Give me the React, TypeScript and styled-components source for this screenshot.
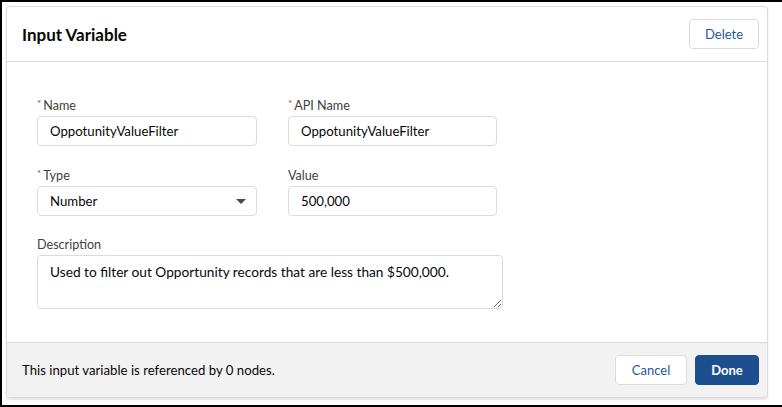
import styled, { createGlobalStyle } from 'styled-components'

const GlobalStyle = createGlobalStyle`
  * { box-sizing: border-box; }
  body {
    margin: 0;
    background: #ffffff;
    font-family: Lato, "Open Sans", "Liberation Sans", sans-serif;
    color: #080707;
  }
`

const Frame = styled.div`
  width: 782px;
  height: 407px;
  border: 2px solid #000;
  border-right: none;
  padding: 4px 14px 7px 4px;
  background: #fff;
`

const Card = styled.section`
  display: flex;
  flex-direction: column;
  height: 100%;
  border: 1px solid #dddbda;
  border-radius: 4px;
  background: #fff;
  box-shadow: 0 2px 2px rgba(0, 0, 0, 0.1);
  overflow: hidden;
`

const Header = styled.header`
  display: flex;
  align-items: center;
  justify-content: space-between;
  height: 55px;
  padding: 0 8px 0 15px;
  border-bottom: 1px solid #dddbda;
`

const Title = styled.h2`
  margin: 0;
  font-size: 17px;
  font-weight: 700;
  color: #080707;
`

const Button = styled.button<{ $brand?: boolean; $w: number }>`
  width: ${p => p.$w}px;
  height: 30px;
  padding: 0;
  border-radius: 4px;
  border: 1px solid ${p => (p.$brand ? '#1b4f8f' : '#dddbda')};
  background: ${p => (p.$brand ? '#1d4f8e' : '#fff')};
  color: ${p => (p.$brand ? '#fff' : '#27579a')};
  font-family: inherit;
  font-size: 13px;
  font-weight: ${p => (p.$brand ? 700 : 400)};
  cursor: pointer;
`

const Body = styled.div`
  flex: 1;
  padding: 34px 30px 0;
  display: grid;
  grid-template-columns: 220px 209px;
  column-gap: 31px;
  align-content: start;
`

const Field = styled.div<{ $wide?: boolean; $top?: number }>`
  display: flex;
  flex-direction: column;
  grid-column: ${p => (p.$wide ? '1 / 3' : 'auto')};
  margin-top: ${p => p.$top ?? 0}px;
`

const Label = styled.label`
  display: flex;
  align-items: center;
  height: 18px;
  margin-bottom: 2px;
  font-size: 12.6px;
  color: #3e3e3c;
`

const Req = styled.abbr`
  color: #c23934;
  font-size: 10px;
  margin-right: 2px;
  text-decoration: none;
  align-self: flex-start;
  margin-top: 1px;
`

const Input = styled.input`
  width: 100%;
  height: 30px;
  padding: 0 12px;
  border: 1px solid #dddbda;
  border-radius: 4px;
  font-family: inherit;
  font-size: 13.2px;
  color: #080707;
  outline: none;
`

const SelectBox = styled.div`
  position: relative;
  display: flex;
  align-items: center;
  height: 30px;
  padding: 0 12px;
  border: 1px solid #dddbda;
  border-radius: 4px;
  font-size: 13.2px;
  color: #080707;
`

const Caret = styled.span`
  position: absolute;
  right: 10px;
  top: 12px;
  width: 0;
  height: 0;
  border-left: 5px solid transparent;
  border-right: 5px solid transparent;
  border-top: 5px solid #4a4a4a;
`

const TextArea = styled.textarea`
  width: 466px;
  height: 54px;
  padding: 6px 12px 5px;
  border: 1px solid #dddbda;
  border-radius: 4px;
  font-family: inherit;
  font-size: 13.7px;
  line-height: 1.5;
  color: #080707;
  outline: none;
`

const Footer = styled.footer`
  display: flex;
  align-items: center;
  justify-content: space-between;
  height: 55px;
  padding: 0 8px 0 15px;
  background: #f3f2f2;
  border-top: 1px solid #dddbda;
`

const Note = styled.span`
  font-size: 13.2px;
  color: #080707;
`

const Actions = styled.div`
  display: flex;
  gap: 8px;
`

export default function App() {
  return (
    <>
      <GlobalStyle />
      <Frame>
        <Card>
          <Header>
            <Title>Input Variable</Title>
            <Button $w={70}>Delete</Button>
          </Header>
          <Body>
            <Field>
              <Label><Req>*</Req>Name</Label>
              <Input defaultValue="OppotunityValueFilter" />
            </Field>
            <Field>
              <Label><Req>*</Req>API Name</Label>
              <Input defaultValue="OppotunityValueFilter" />
            </Field>
            <Field $top={20}>
              <Label><Req>*</Req>Type</Label>
              <SelectBox>
                Number
                <Caret />
              </SelectBox>
            </Field>
            <Field $top={20}>
              <Label>Value</Label>
              <Input defaultValue="500,000" />
            </Field>
            <Field $wide $top={19}>
              <Label>Description</Label>
              <TextArea defaultValue="Used to filter out Opportunity records that are less than $500,000." />
            </Field>
          </Body>
          <Footer>
            <Note>This input variable is referenced by 0 nodes.</Note>
            <Actions>
              <Button $w={72}>Cancel</Button>
              <Button $w={64} $brand>Done</Button>
            </Actions>
          </Footer>
        </Card>
      </Frame>
    </>
  )
}
